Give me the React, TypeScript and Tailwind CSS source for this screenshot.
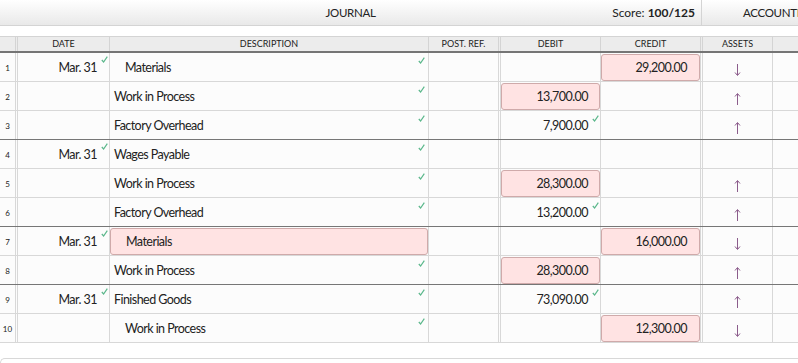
type Row = {
  n: number;
  date?: string;
  desc: string;
  indent?: boolean;
  descBox?: boolean;
  debit?: string;
  debitBox?: boolean;
  credit?: string;
  creditBox?: boolean;
  arrow?: "up" | "down";
  sep?: boolean;
};

const rows: Row[] = [
  { n: 1, date: "Mar. 31", desc: "Materials", indent: true, credit: "29,200.00", creditBox: true, arrow: "down" },
  { n: 2, desc: "Work in Process", debit: "13,700.00", debitBox: true, arrow: "up" },
  { n: 3, desc: "Factory Overhead", debit: "7,900.00", arrow: "up", sep: true },
  { n: 4, date: "Mar. 31", desc: "Wages Payable" },
  { n: 5, desc: "Work in Process", debit: "28,300.00", debitBox: true, arrow: "up" },
  { n: 6, desc: "Factory Overhead", debit: "13,200.00", arrow: "up", sep: true },
  { n: 7, date: "Mar. 31", desc: "Materials", indent: true, descBox: true, credit: "16,000.00", creditBox: true, arrow: "down" },
  { n: 8, desc: "Work in Process", debit: "28,300.00", debitBox: true, arrow: "up", sep: true },
  { n: 9, date: "Mar. 31", desc: "Finished Goods", debit: "73,090.00", arrow: "up" },
  { n: 10, desc: "Work in Process", indent: true, credit: "12,300.00", creditBox: true, arrow: "down" },
];

function Check({ className = "" }: { className?: string }) {
  return (
    <svg className={`absolute ${className}`} width="7" height="7" viewBox="0 0 7 7">
      <path d="M0.8 4 L2.6 6 L6.3 0.6" fill="none" stroke="#5cb88c" strokeWidth="1.2" />
    </svg>
  );
}

function Arrow({ dir }: { dir: "up" | "down" }) {
  return (
    <svg width="7" height="12" viewBox="0 0 7 12">
      {dir === "down" ? (
        <path d="M3.5 0 V11 M1 8.5 L3.5 11.5 L6 8.5" fill="none" stroke="#8b5c8b" strokeWidth="1" />
      ) : (
        <path d="M3.5 1 V12 M1 3.5 L3.5 0.5 L6 3.5" fill="none" stroke="#8b5c8b" strokeWidth="1" />
      )}
    </svg>
  );
}

export default function App() {
  return (
    <div
      className="w-[798px] h-[363px] overflow-hidden bg-white text-[#222]"
      style={{ fontFamily: 'Lato, "Liberation Sans", sans-serif' }}
    >
      <div className="w-[1100px]">
        {/* TOP BAR */}
        <div className="flex h-[26px] border-b border-[#d4d4d4] bg-gradient-to-b from-white to-[#e9e9e9] text-[12px]">
          <div className="relative flex w-[702px] items-center justify-center border-r border-[#d4d4d4]">
            <span className="text-[11.5px] tracking-[-0.3px]">JOURNAL</span>
            <span className="absolute right-[6px]">
              Score: <b>100/125</b>
            </span>
          </div>
          <div className="flex items-center pl-[41px] text-[11.5px] tracking-[-0.3px]">ACCOUNTING EQUATION</div>
        </div>

        {/* HEADER */}
        <div className="mt-[10px] flex h-[17px] border-t border-b-2 border-[#d4d4d4] border-b-[#757575] bg-[#ececec] text-[9px] uppercase">
          <div className="w-[16px] border-r border-[#d4d4d4]" />
          <div className="w-[1px]" />
          <div className="flex w-[93px] items-center justify-center border-x border-[#d4d4d4]">Date</div>
          <div className="flex w-[319px] items-center justify-center border-r border-[#d4d4d4]">Description</div>
          <div className="flex w-[70px] items-center justify-center border-r border-[#d4d4d4]">Post. Ref.</div>
          <div className="w-[1px]" />
          <div className="flex w-[101px] items-center justify-center border-x border-[#d4d4d4]">Debit</div>
          <div className="flex w-[100px] items-center justify-center border-r border-[#d4d4d4]">Credit</div>
          <div className="w-[1px]" />
          <div className="flex w-[71px] items-center justify-center border-x border-[#d4d4d4]">Assets</div>
          <div className="flex w-[100px] items-center justify-center border-r border-[#d4d4d4]">Liabilities</div>
        </div>

        {/* BODY */}
        {rows.map((r) => (
          <div
            key={r.n}
            className={`flex h-[29px] border-b bg-[#fcfcfc] text-[12.5px] tracking-[-0.55px] ${r.sep ? "border-[#767676]" : "border-[#d8d8d8]"}`}
          >
            <div className="flex w-[16px] items-center justify-center border-r border-[#d8d8d8] pt-[2px] text-[8px] tracking-normal">
              {r.n}
            </div>
            <div className="w-[1px]" />
            <div className="relative flex w-[93px] items-center justify-end border-x border-[#d8d8d8] pr-[12px] pt-[2px]">
              {r.date}
              {r.date && <Check className="right-[1px] top-[3px]" />}
            </div>
            <div className="relative w-[319px] border-r border-[#d8d8d8] pt-[1px]">
              {r.descBox ? (
                <div className="flex h-full items-center rounded-[3px] border border-[#cfaaaa] bg-[#ffe3e3] pl-[15px] pt-[1px]">
                  {r.desc}
                </div>
              ) : (
                <div className={`flex h-full items-center pt-[2px] ${r.indent ? "pl-[15px]" : "pl-[4px]"}`}>
                  {r.desc}
                </div>
              )}
              {!r.descBox && <Check className="right-[3px] top-[4px]" />}
            </div>
            <div className="w-[70px] border-r border-[#d8d8d8]" />
            <div className="w-[1px]" />
            <div className="relative w-[101px] border-x border-[#d8d8d8] pt-[1px]">
              {r.debit &&
                (r.debitBox ? (
                  <div className="flex h-full items-center justify-end rounded-[3px] border border-[#cfaaaa] bg-[#ffe3e3] pr-[11px] pt-[1px]">
                    {r.debit}
                  </div>
                ) : (
                  <>
                    <div className="flex h-full items-center justify-end pr-[12px] pt-[2px]">{r.debit}</div>
                    <Check className="right-[1px] top-[4px]" />
                  </>
                ))}
            </div>
            <div className="relative w-[100px] border-r border-[#d8d8d8] pt-[1px]">
              {r.credit && (
                <div className="flex h-full items-center justify-end rounded-[3px] border border-[#cfaaaa] bg-[#ffe3e3] pr-[12px] pt-[1px]">
                  {r.credit}
                </div>
              )}
            </div>
            <div className="w-[1px]" />
            <div className="flex w-[71px] items-center justify-center border-x border-[#d8d8d8] pt-[5px]">
              {r.arrow && <Arrow dir={r.arrow} />}
            </div>
            <div className="w-[100px] border-r border-[#d8d8d8]" />
          </div>
        ))}

        {/* NEXT PANEL EDGE */}
        <div className="mt-[15px] h-[10px] rounded-tl-[5px] border-l border-t border-[#d8d8d8]" />
      </div>
    </div>
  );
}
